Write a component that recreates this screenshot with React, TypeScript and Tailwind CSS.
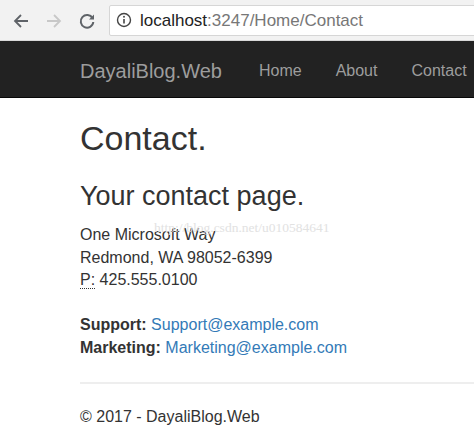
import React from "react";

export default function App() {
  return (
    <div
      className="relative w-[474px] h-[444px] overflow-hidden bg-white text-[#333333]"
      style={{ fontFamily: '"Liberation Sans", Arial, sans-serif' }}
    >
      {/* Browser toolbar */}
      <div className="flex h-[41px] items-center bg-[#f2f2f2] border-b border-[#d9d9d9]">
        <div className="flex items-center pl-[12px] gap-[15px]">
          <svg width="18" height="18" viewBox="0 0 18 18" className="mt-[1px]">
            <path d="M16 9H3M9 3L3 9l6 6" fill="none" stroke="#5f6368" strokeWidth="1.8" />
          </svg>
          <svg width="18" height="18" viewBox="0 0 18 18" className="mt-[1px]">
            <path d="M2 9h13M9 3l6 6-6 6" fill="none" stroke="#c8c8c8" strokeWidth="1.8" />
          </svg>
          <svg width="18" height="18" viewBox="0 0 18 18" className="mt-[1px]">
            <path
              d="M14.5 6.2A6.3 6.3 0 1 0 15.3 10"
              fill="none"
              stroke="#5f6368"
              strokeWidth="2"
            />
            <path d="M16 2.5v5h-5z" fill="#5f6368" />
          </svg>
        </div>
        <div className="ml-[13px] -mr-[4px] flex h-[31px] flex-1 items-center rounded-[2px] border border-[#d6d6d6] bg-white pl-[6px]">
          <svg width="16" height="16" viewBox="0 0 16 16" className="mr-[8px]">
            <circle cx="8" cy="8" r="6.5" fill="none" stroke="#444" strokeWidth="1.4" />
            <path d="M8 7v4.5" stroke="#444" strokeWidth="1.6" />
            <circle cx="8" cy="4.8" r="0.95" fill="#444" />
          </svg>
          <span className="text-[17px] leading-none">
            <span className="text-[#222]">localhost</span>
            <span className="text-[#777]">:3247/Home/Contact</span>
          </span>
        </div>
      </div>

      {/* Navbar */}
      <nav className="flex h-[57px] items-center bg-[#222222] border-b border-[#080808] pl-[80px] pt-[3px] whitespace-nowrap">
        <span className="mr-[20px] text-[20px] text-[#9d9d9d]">DayaliBlog.Web</span>
        <span className="px-[17px] text-[16px] text-[#9d9d9d]">Home</span>
        <span className="px-[17px] text-[16px] text-[#9d9d9d]">About</span>
        <span className="px-[17px] text-[16px] text-[#9d9d9d]">Contact</span>
      </nav>

      {/* Body */}
      <div className="pl-[80px]">
        <h2 className="mt-[22px] text-[34px] leading-[1.1]">Contact.</h2>
        <h3 className="mt-[25px] text-[27px] leading-[1.1]">Your contact page.</h3>
        <address className="mt-[12px] not-italic text-[16px] leading-[22.5px]">
          One Microsoft Way
          <br />
          Redmond, WA 98052-6399
          <br />
          <abbr title="Phone" className="no-underline border-b border-dotted border-[#333]">
            P:
          </abbr>{" "}
          425.555.0100
        </address>
        <address className="mt-[22.5px] not-italic text-[16px] leading-[22.5px]">
          <strong>Support:</strong> <span className="text-[#337ab7]">Support@example.com</span>
          <br />
          <strong>Marketing:</strong> <span className="text-[#337ab7]">Marketing@example.com</span>
        </address>
        <div className="mt-[23px] h-[2px] bg-[#eeeeee]" />
        <p className="mt-[22px] text-[16px] leading-[22.5px]">© 2017 - DayaliBlog.Web</p>
      </div>

      {/* Watermark */}
      <div
        className="absolute left-[154px] top-[218px] text-[13.5px] text-[#e2e2e2] whitespace-nowrap"
        style={{ fontFamily: '"Liberation Serif", serif' }}
      >
        http://blog.csdn.net/u010584641
      </div>
    </div>
  );
}
